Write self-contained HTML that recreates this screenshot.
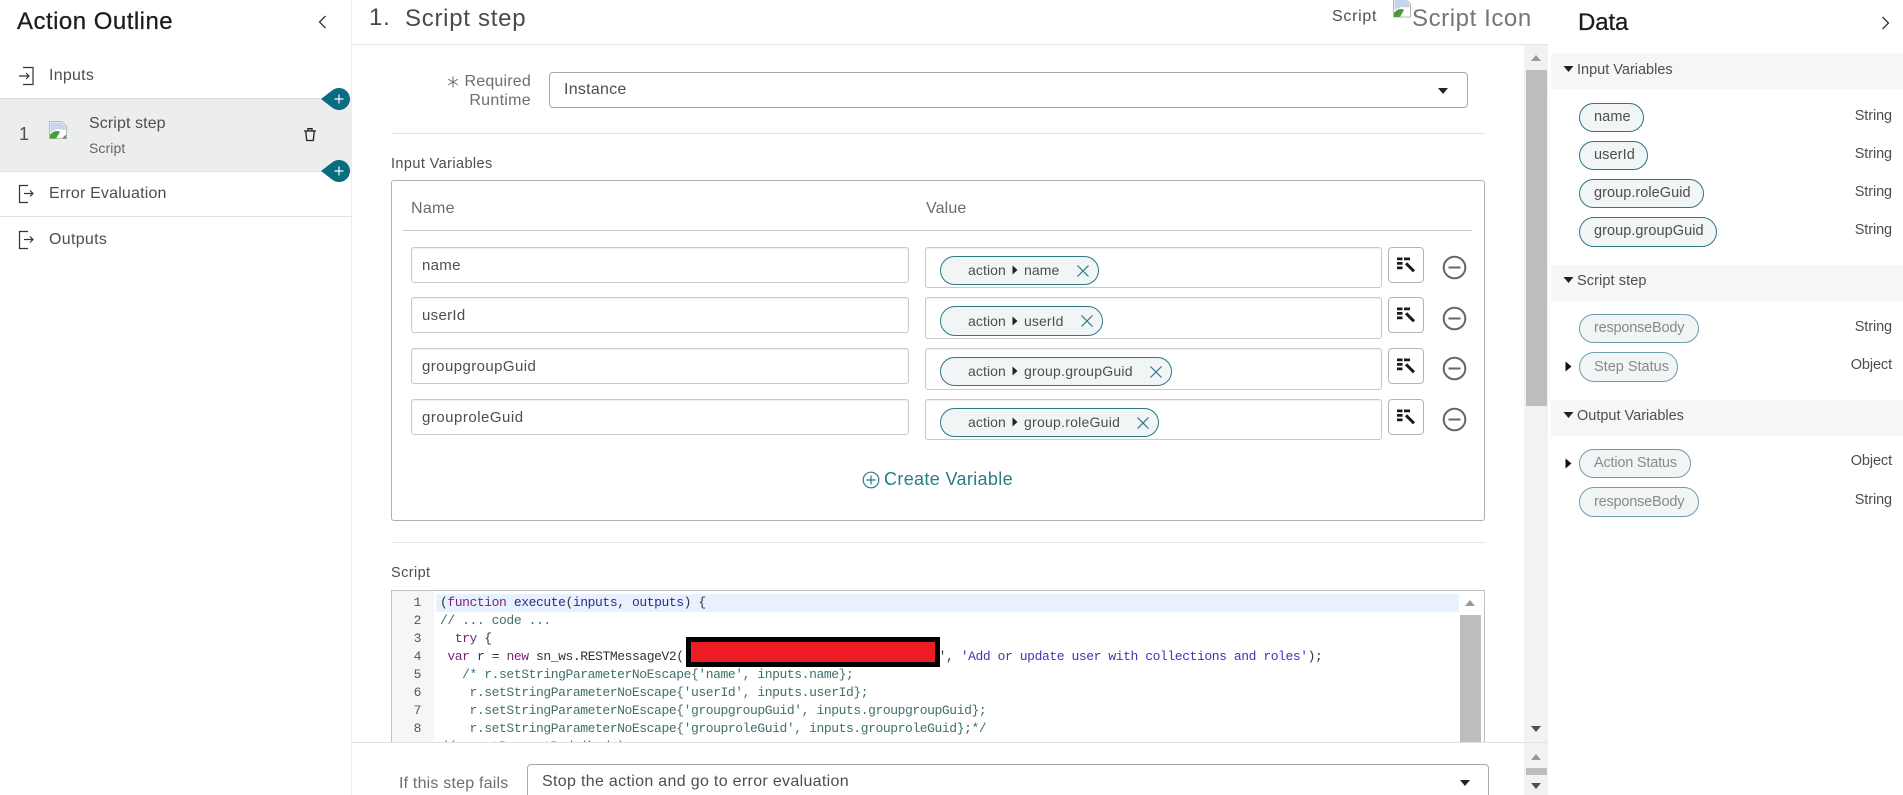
<!DOCTYPE html>
<html lang="en"><head><meta charset="utf-8"><title>Action Outline</title>
<style>
html,body{margin:0;padding:0;background:#fff;width:1903px;height:795px;overflow:hidden}
body{position:relative;font-family:"Liberation Sans",sans-serif;color:#4e4e4e;font-size:15px}
.t{position:absolute;white-space:nowrap;line-height:20px;letter-spacing:.1px}
.b{position:absolute;box-sizing:border-box}
.in{border:1px solid #c9c9c9;border-radius:3px;background:#fff;box-shadow:inset 0 1px 1px #f0f0f0}
.pill{position:absolute;box-sizing:border-box;border:1px solid #2c7885;border-radius:15px;background:#f1f5f6}
.pill.g{border-color:#6f9fa8}
.g2{color:#8a8a8a}
.s{position:absolute}
.sec{position:absolute;left:1551px;width:352px;height:36px;background:#f6f6f6}
.code{position:absolute;left:440px;font:13px/18px "Liberation Mono",monospace;letter-spacing:-.42px;white-space:pre;color:#333;height:18px}
.k{color:#7a1f78}.f{color:#2b2b8f}.c{color:#3f706c}.q{color:#4a30b5}
.ln{position:absolute;left:392px;width:29px;text-align:right;font:13px/18px "Liberation Mono",monospace;letter-spacing:-.42px;color:#555}
.h{-webkit-text-stroke:.25px #1c1c1c}
</style></head><body>

<!-- LEFT PANEL -->
<div class="b" style="left:351px;top:0;width:1px;height:795px;background:#eee"></div>
<div class="t h" style="left:17px;top:12px;font-size:24px;color:#1c1c1c;letter-spacing:.48px">Action Outline</div>
<svg class="s" style="left:316px;top:14px" width="14" height="16" fill="none" stroke="#333" stroke-width="1.3"><path d="M9.5 2 3.5 8l6 6"/></svg>

<svg class="s" style="left:16px;top:65px" width="20" height="22" fill="none" stroke="#333" stroke-width="1.2"><path d="M7 2.500h10v17H7M3 11h10M10 8l3 3-3 3"/></svg>
<div class="t" style="left:49px;top:66px;font-size:16px;letter-spacing:.25px">Inputs</div>

<div class="b" style="left:0;top:98px;width:351px;height:74px;background:#eceeee;border-top:1px solid #dcdcdc;border-bottom:1px solid #dcdcdc"></div>
<div class="t" style="left:19px;top:124px;font-size:18px">1</div>
<svg class="s" style="left:49px;top:121px" width="18" height="18"><path d="M.5.5h12l5 5v12H.5z" fill="#fff" stroke="#b8b8b8"/><path d="M1.500 1.500h10.500l4.500 4.500v3L8 8 1.500 11z" fill="#c5d6ec"/><path d="M1 17.500V14c3-4 7-5 10-3l-4 6.500z" fill="#4c9c3c"/><path d="M13 17.500h4v-4z" fill="#4c9c3c"/></svg>
<div class="t" style="left:89px;top:114px;font-size:16px;letter-spacing:.1px">Script step</div>
<div class="t" style="left:89px;top:138px;font-size:14px;color:#666;letter-spacing:.09px">Script</div>
<svg class="s" style="left:303px;top:127px" width="14" height="15" fill="none" stroke="#222" stroke-width="1.300"><path d="M1 4h12M5 4V1.700h4V4M2.700 4l1 9.500h6.600l1-9.500"/></svg>

<svg class="s" style="left:320px;top:87px" width="31" height="24"><path d="M1 12 12 3.500A11 11 0 1 1 12 20.500z" fill="#0a6c80"/><path d="M19 7.500v9M14.500 12h9" stroke="#fff" stroke-width="1.200"/></svg>
<svg class="s" style="left:320px;top:159px" width="31" height="24"><path d="M1 12 12 3.500A11 11 0 1 1 12 20.500z" fill="#0a6c80"/><path d="M19 7.500v9M14.500 12h9" stroke="#fff" stroke-width="1.200"/></svg>

<svg class="s" style="left:16px;top:183px" width="20" height="22" fill="none" stroke="#333" stroke-width="1.200"><path d="M12 2.500H3.500v17H12M8 10.500h9M14 7.500l3 3-3 3"/></svg>
<div class="t" style="left:49px;top:184px;font-size:16px;letter-spacing:.18px">Error Evaluation</div>
<div class="b" style="left:0;top:216px;width:351px;height:1px;background:#e2e2e2"></div>
<svg class="s" style="left:16px;top:229px" width="20" height="22" fill="none" stroke="#333" stroke-width="1.200"><path d="M12 2.500H3.500v17H12M8 10.500h9M14 7.500l3 3-3 3"/></svg>
<div class="t" style="left:49px;top:230px;font-size:16px;letter-spacing:.3px">Outputs</div>

<!-- HEADER -->
<div class="t" style="left:369px;top:8px;font-size:24px;color:#4a4a4a;letter-spacing:.8px">1.</div>
<div class="t" style="left:405px;top:9px;font-size:24px;color:#4a4a4a;letter-spacing:.72px">Script step</div>
<div class="t" style="left:1332px;top:7px;font-size:16px;letter-spacing:.7px">Script</div>
<svg class="s" style="left:1393px;top:0" width="18" height="18"><path d="M.5-1h12l5 5v13H.5z" fill="#fff" stroke="#b8b8b8"/><path d="M1.500 0h10.500l4.500 4.500v3L8 7 1.500 10z" fill="#c5d6ec"/><path d="M1 17V13c3-4 7-5 10-3l-4 7z" fill="#4c9c3c"/></svg>
<div class="t" style="left:1412px;top:9px;font-size:24px;color:#757575;letter-spacing:.58px">Script Icon</div>
<div class="b" style="left:352px;top:44px;width:1196px;height:1px;background:#e4e4e4"></div>

<!-- MAIN SCROLLBAR -->
<div class="b" style="left:1524px;top:45px;width:24px;height:750px;background:#f2f2f2"></div>
<div class="b" style="left:1526px;top:70px;width:21px;height:336px;background:#bdbdbd"></div>
<svg class="s" style="left:1530px;top:54px" width="12" height="8"><path d="M6 1 11 7H1z" fill="#9a9a9a"/></svg>
<svg class="s" style="left:1530px;top:725px" width="12" height="8"><path d="M6 7 11 1H1z" fill="#505050"/></svg>

<!-- RUNTIME -->
<svg class="s" style="left:447px;top:76px" width="12" height="12" fill="none" stroke="#777" stroke-width="1.100"><path d="M6 .5v11M1.200 3.200l9.600 5.600M10.800 3.200 1.200 8.800"/></svg>
<div class="t" style="left:445px;top:72px;font-size:16px;color:#6e6e6e;width:86px;text-align:right;letter-spacing:.2px">Required</div>
<div class="t" style="left:445px;top:91px;font-size:16px;color:#6e6e6e;width:86px;text-align:right;letter-spacing:.3px">Runtime</div>
<div class="b" style="left:549px;top:72px;width:919px;height:36px;border:1px solid #a8a8a8;border-radius:4px"></div>
<div class="t" style="left:564px;top:80px;font-size:16px;letter-spacing:.26px">Instance</div>
<svg class="s" style="left:1437px;top:87px" width="12" height="8"><path d="M1 1h10L6 7z" fill="#222"/></svg>
<div class="b" style="left:391px;top:133px;width:1094px;height:1px;background:#e4e4e4"></div>

<!-- INPUT VARIABLES -->
<div class="t" style="left:391px;top:154px;font-size:14.500px;letter-spacing:.4px">Input Variables</div>
<div class="b" style="left:391px;top:180px;width:1094px;height:341px;border:1px solid #b0b0b0;border-radius:3px"></div>
<div class="t" style="left:411px;top:199px;font-size:16px;color:#6b6b6b;letter-spacing:.3px">Name</div>
<div class="t" style="left:926px;top:199px;font-size:16px;color:#6b6b6b;letter-spacing:.15px">Value</div>
<div class="b" style="left:403px;top:230px;width:1069px;height:1px;background:#c8c8c8"></div>

<div class="b in" style="left:411px;top:247px;width:498px;height:36px"></div>
<div class="b in" style="left:411px;top:297px;width:498px;height:36px"></div>
<div class="b in" style="left:411px;top:348px;width:498px;height:36px"></div>
<div class="b in" style="left:411px;top:399px;width:498px;height:36px"></div>
<div class="t" style="left:422px;top:256px;font-size:15px;letter-spacing:.3px">name</div>
<div class="t" style="left:422px;top:306px;font-size:15px;letter-spacing:.3px">userId</div>
<div class="t" style="left:422px;top:357px;font-size:15px;letter-spacing:.42px">groupgroupGuid</div>
<div class="t" style="left:422px;top:408px;font-size:15px;letter-spacing:.5px">grouproleGuid</div>

<div class="b in" style="left:925px;top:247px;width:457px;height:41px"></div>
<div class="b in" style="left:925px;top:297px;width:457px;height:42px"></div>
<div class="b in" style="left:925px;top:348px;width:457px;height:42px"></div>
<div class="b in" style="left:925px;top:399px;width:457px;height:41px"></div>

<div class="pill" style="left:940px;top:256px;width:159px;height:29px"></div>
<div class="pill" style="left:940px;top:306px;width:163px;height:30px"></div>
<div class="pill" style="left:940px;top:357px;width:232px;height:29px"></div>
<div class="pill" style="left:940px;top:408px;width:219px;height:29px"></div>

<div class="t" style="left:968px;top:260px;font-size:14px;letter-spacing:.09px">action</div>
<div class="t" style="left:968px;top:311px;font-size:14px;letter-spacing:.09px">action</div>
<div class="t" style="left:968px;top:361px;font-size:14px;letter-spacing:.09px">action</div>
<div class="t" style="left:968px;top:412px;font-size:14px;letter-spacing:.09px">action</div>
<svg class="s" style="left:1012px;top:265px" width="6" height="10"><path d="M.5.5 5.500 5 .5 9.500z" fill="#222"/></svg>
<svg class="s" style="left:1012px;top:316px" width="6" height="10"><path d="M.5.5 5.500 5 .5 9.500z" fill="#222"/></svg>
<svg class="s" style="left:1012px;top:366px" width="6" height="10"><path d="M.5.5 5.500 5 .5 9.500z" fill="#222"/></svg>
<svg class="s" style="left:1012px;top:417px" width="6" height="10"><path d="M.5.5 5.500 5 .5 9.500z" fill="#222"/></svg>
<div class="t" style="left:1024px;top:260px;font-size:14px;letter-spacing:.1px">name</div>
<div class="t" style="left:1024px;top:311px;font-size:14px;letter-spacing:.1px">userId</div>
<div class="t" style="left:1024px;top:361px;font-size:14px;letter-spacing:.25px">group.groupGuid</div>
<div class="t" style="left:1024px;top:412px;font-size:14px;letter-spacing:.25px">group.roleGuid</div>
<svg class="s" style="left:1076px;top:264px" width="14" height="14" fill="none" stroke="#2c7885" stroke-width="1.200"><path d="M1.500 1.500l11 11M12.500 1.500l-11 11"/></svg>
<svg class="s" style="left:1080px;top:314px" width="14" height="14" fill="none" stroke="#2c7885" stroke-width="1.200"><path d="M1.500 1.500l11 11M12.500 1.500l-11 11"/></svg>
<svg class="s" style="left:1149px;top:365px" width="14" height="14" fill="none" stroke="#2c7885" stroke-width="1.200"><path d="M1.500 1.500l11 11M12.500 1.500l-11 11"/></svg>
<svg class="s" style="left:1136px;top:416px" width="14" height="14" fill="none" stroke="#2c7885" stroke-width="1.200"><path d="M1.500 1.500l11 11M12.500 1.500l-11 11"/></svg>

<!-- data picker buttons -->
<div class="b" style="left:1388px;top:247px;width:36px;height:36px;border:1px solid #b5b5b5;border-radius:4px"></div>
<div class="b" style="left:1388px;top:297px;width:36px;height:36px;border:1px solid #b5b5b5;border-radius:4px"></div>
<div class="b" style="left:1388px;top:348px;width:36px;height:36px;border:1px solid #b5b5b5;border-radius:4px"></div>
<div class="b" style="left:1388px;top:399px;width:36px;height:36px;border:1px solid #b5b5b5;border-radius:4px"></div>
<svg class="s" style="left:1396px;top:256px" width="20" height="18"><path d="M1 1.500h5.500v2.700H1zM8 1.500h6v2.700H8zM1 6h5.500v2.700H1zM1 10.500h5.500v2.700H1z" fill="#1a1a1a"/><path d="M10 7.300l8 8" stroke="#1a1a1a" stroke-width="3"/></svg>
<svg class="s" style="left:1396px;top:306px" width="20" height="18"><path d="M1 1.500h5.500v2.700H1zM8 1.500h6v2.700H8zM1 6h5.500v2.700H1zM1 10.500h5.500v2.700H1z" fill="#1a1a1a"/><path d="M10 7.300l8 8" stroke="#1a1a1a" stroke-width="3"/></svg>
<svg class="s" style="left:1396px;top:357px" width="20" height="18"><path d="M1 1.500h5.500v2.700H1zM8 1.500h6v2.700H8zM1 6h5.500v2.700H1zM1 10.500h5.500v2.700H1z" fill="#1a1a1a"/><path d="M10 7.300l8 8" stroke="#1a1a1a" stroke-width="3"/></svg>
<svg class="s" style="left:1396px;top:408px" width="20" height="18"><path d="M1 1.500h5.500v2.700H1zM8 1.500h6v2.700H8zM1 6h5.500v2.700H1zM1 10.500h5.500v2.700H1z" fill="#1a1a1a"/><path d="M10 7.300l8 8" stroke="#1a1a1a" stroke-width="3"/></svg>

<svg class="s" style="left:1442px;top:255px" width="25" height="25" fill="none" stroke="#666" stroke-width="2"><circle cx="12.500" cy="12.500" r="10.800"/><path d="M6.500 12.500h12"/></svg>
<svg class="s" style="left:1442px;top:306px" width="25" height="25" fill="none" stroke="#666" stroke-width="2"><circle cx="12.500" cy="12.500" r="10.800"/><path d="M6.500 12.500h12"/></svg>
<svg class="s" style="left:1442px;top:356px" width="25" height="25" fill="none" stroke="#666" stroke-width="2"><circle cx="12.500" cy="12.500" r="10.800"/><path d="M6.500 12.500h12"/></svg>
<svg class="s" style="left:1442px;top:407px" width="25" height="25" fill="none" stroke="#666" stroke-width="2"><circle cx="12.500" cy="12.500" r="10.800"/><path d="M6.500 12.500h12"/></svg>

<svg class="s" style="left:862px;top:471px" width="18" height="18" fill="none" stroke="#2a7a8a" stroke-width="1.200"><circle cx="9" cy="9" r="7.800"/><path d="M9 4.500v9M4.500 9h9"/></svg>
<div class="t" style="left:884px;top:469px;font-size:18px;color:#2a7a8a;letter-spacing:.35px">Create Variable</div>

<div class="b" style="left:391px;top:542px;width:1094px;height:1px;background:#e4e4e4"></div>

<!-- SCRIPT -->
<div class="t" style="left:391px;top:563px;font-size:14.500px;letter-spacing:.4px">Script</div>
<div class="b" style="left:391px;top:590px;width:1094px;height:160px;border:1px solid #c0c0c0"></div>
<div class="b" style="left:392px;top:591px;width:42px;height:155px;background:#f6f6f6"></div>
<div class="b" style="left:436px;top:594px;width:1023px;height:18px;background:#e8f2fe"></div>
<div class="b" style="left:1460px;top:591px;width:24px;height:155px;background:#fff"></div>
<div class="b" style="left:1460px;top:615px;width:21px;height:130px;background:#bdbdbd"></div>
<svg class="s" style="left:1464px;top:599px" width="12" height="8"><path d="M6 1 11 7H1z" fill="#9a9a9a"/></svg>

<div class="ln" style="top:594px">1</div><div class="ln" style="top:612px">2</div><div class="ln" style="top:630px">3</div><div class="ln" style="top:648px">4</div><div class="ln" style="top:666px">5</div><div class="ln" style="top:684px">6</div><div class="ln" style="top:702px">7</div><div class="ln" style="top:720px">8</div>

<div class="code" style="top:594px">(<span class="k">function</span> <span class="f">execute</span>(<span class="f">inputs</span>, <span class="f">outputs</span>) {</div>
<div class="code c" style="top:612px">// ... code ...</div>
<div class="code" style="top:630px">  <span class="k">try</span> {</div>
<div class="code" style="top:648px"> <span class="k">var</span> <span class="f">r</span> = <span class="k">new</span> sn_ws.RESTMessageV2(</div>
<div class="code q" style="top:648px;left:938.600px"><span style="color:#333">'</span><span style="color:#333">, </span>'Add or update user with collections and roles'<span style="color:#333">);</span></div>
<div class="code c" style="top:666px">   /* r.setStringParameterNoEscape{'name', inputs.name};</div>
<div class="code c" style="top:684px">    r.setStringParameterNoEscape{'userId', inputs.userId};</div>
<div class="code c" style="top:702px">    r.setStringParameterNoEscape{'groupgroupGuid', inputs.groupgroupGuid};</div>
<div class="code c" style="top:720px">    r.setStringParameterNoEscape{'grouproleGuid', inputs.grouproleGuid};*/</div>
<div class="code c" style="top:738px">// r.setRequestBody(body);</div>
<div class="b" style="left:686px;top:637px;width:254px;height:30px;background:#000"></div>
<div class="b" style="left:691px;top:642px;width:244px;height:20px;background:#ed1c24"></div>

<!-- FOOTER -->
<div class="b" style="left:352px;top:742px;width:1172px;height:53px;background:#fff;border-top:1px solid #e2e2e2"></div>
<div class="t" style="left:399px;top:774px;font-size:16px;color:#6e6e6e;letter-spacing:.2px">If this step fails</div>
<div class="b" style="left:527px;top:764px;width:962px;height:50px;border:1px solid #a8a8a8;border-radius:4px"></div>
<div class="t" style="left:542px;top:772px;font-size:16px;letter-spacing:.32px">Stop the action and go to error evaluation</div>
<svg class="s" style="left:1459px;top:779px" width="12" height="8"><path d="M1 1h10L6 7z" fill="#222"/></svg>
<div class="b" style="left:1524px;top:742px;width:24px;height:1px;background:#e2e2e2"></div>
<svg class="s" style="left:1530px;top:753px" width="12" height="8"><path d="M6 1 11 7H1z" fill="#9a9a9a"/></svg>
<div class="b" style="left:1526px;top:768px;width:21px;height:7px;background:#bdbdbd"></div>
<svg class="s" style="left:1530px;top:782px" width="12" height="8"><path d="M6 7 11 1H1z" fill="#505050"/></svg>

<!-- RIGHT PANEL -->
<div class="t h" style="left:1578px;top:13px;font-size:24px;color:#1c1c1c;letter-spacing:-.1px">Data</div>
<svg class="s" style="left:1878px;top:15px" width="14" height="16" fill="none" stroke="#333" stroke-width="1.300"><path d="M4.500 2l6 6-6 6"/></svg>

<div class="sec" style="top:53px"></div>
<div class="sec" style="top:265px"></div>
<div class="sec" style="top:400px"></div>
<svg class="s" style="left:1563px;top:65px" width="11" height="8"><path d="M.5 1h10l-5 6z" fill="#222"/></svg>
<svg class="s" style="left:1563px;top:276px" width="11" height="8"><path d="M.5 1h10l-5 6z" fill="#222"/></svg>
<svg class="s" style="left:1563px;top:411px" width="11" height="8"><path d="M.5 1h10l-5 6z" fill="#222"/></svg>
<div class="t" style="left:1577px;top:60px;font-size:14.500px;letter-spacing:0">Input Variables</div>
<div class="t" style="left:1577px;top:271px;font-size:14.500px;letter-spacing:.1px">Script step</div>
<div class="t" style="left:1577px;top:406px;font-size:14.500px;letter-spacing:0">Output Variables</div>

<div class="pill" style="left:1579px;top:103px;width:65px;height:29px"></div>
<div class="pill" style="left:1579px;top:141px;width:69px;height:29px"></div>
<div class="pill" style="left:1579px;top:179px;width:125px;height:29px"></div>
<div class="pill" style="left:1579px;top:217px;width:138px;height:30px"></div>
<div class="pill g" style="left:1579px;top:314px;width:120px;height:29px"></div>
<div class="pill g" style="left:1579px;top:352px;width:99px;height:30px"></div>
<div class="pill g" style="left:1579px;top:449px;width:112px;height:29px"></div>
<div class="pill g" style="left:1579px;top:487px;width:120px;height:30px"></div>

<div class="t" style="left:1594px;top:107px;font-size:14.500px;letter-spacing:.1px">name</div>
<div class="t" style="left:1594px;top:145px;font-size:14.500px;letter-spacing:.1px">userId</div>
<div class="t" style="left:1594px;top:183px;font-size:14.500px;letter-spacing:.05px">group.roleGuid</div>
<div class="t" style="left:1594px;top:221px;font-size:14.500px;letter-spacing:.05px">group.groupGuid</div>
<div class="t g2" style="left:1594px;top:318px;font-size:14.500px;letter-spacing:-.2px">responseBody</div>
<div class="t g2" style="left:1594px;top:357px;font-size:14.500px;letter-spacing:0">Step Status</div>
<div class="t g2" style="left:1594px;top:453px;font-size:14.500px;letter-spacing:-.2px">Action Status</div>
<div class="t g2" style="left:1594px;top:492px;font-size:14.500px;letter-spacing:-.2px">responseBody</div>

<svg class="s" style="left:1565px;top:361px" width="7" height="11"><path d="M.5.5 6.500 5.500.5 10.500z" fill="#111"/></svg>
<svg class="s" style="left:1565px;top:458px" width="7" height="11"><path d="M.5.5 6.500 5.500.5 10.500z" fill="#111"/></svg>

<div class="t" style="right:11px;top:106px;font-size:14.500px;letter-spacing:-.1px">String</div>
<div class="t" style="right:11px;top:144px;font-size:14.500px;letter-spacing:-.1px">String</div>
<div class="t" style="right:11px;top:182px;font-size:14.500px;letter-spacing:-.1px">String</div>
<div class="t" style="right:11px;top:220px;font-size:14.500px;letter-spacing:-.1px">String</div>
<div class="t" style="right:11px;top:317px;font-size:14.500px;letter-spacing:-.1px">String</div>
<div class="t" style="right:11px;top:355px;font-size:14.500px;letter-spacing:-.1px">Object</div>
<div class="t" style="right:11px;top:451px;font-size:14.500px;letter-spacing:-.1px">Object</div>
<div class="t" style="right:11px;top:490px;font-size:14.500px;letter-spacing:-.1px">String</div>

</body></html>
